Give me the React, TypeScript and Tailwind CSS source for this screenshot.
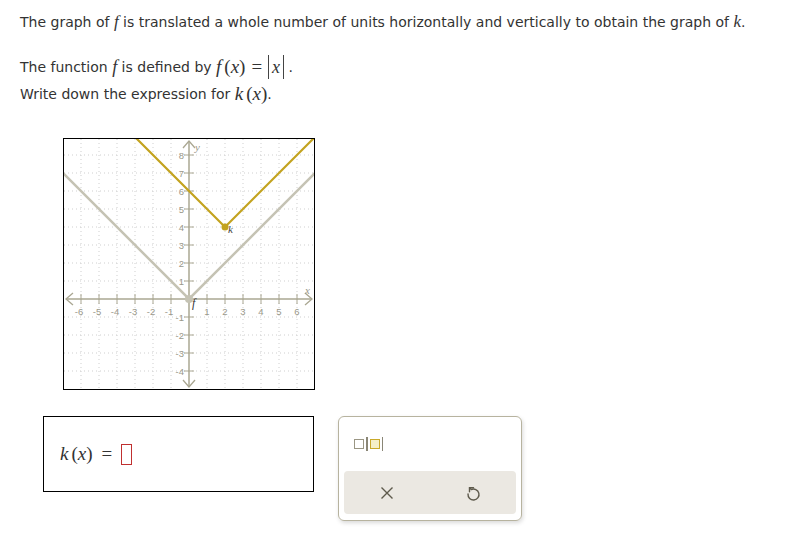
import React from "react";

const U = 18;
const OX = 125;
const OY = 160;

function Graph() {
  const xs = [-6, -5, -4, -3, -2, -1, 1, 2, 3, 4, 5, 6];
  const ys = [-4, -3, -2, -1, 1, 2, 3, 4, 5, 6, 7, 8];
  const grid: React.ReactNode[] = [];
  for (let k = -6; k <= 6; k++) {
    const x = OX + k * U;
    if (k !== 0)
      grid.push(<line key={"gx" + k} x1={x} y1={0} x2={x} y2={250} stroke="#cfcfcf" strokeWidth={1} strokeDasharray="1 3" />);
  }
  for (let k = -4; k <= 8; k++) {
    const y = OY - k * U;
    if (k !== 0)
      grid.push(<line key={"gy" + k} x1={0} y1={y} x2={250} y2={y} stroke="#cfcfcf" strokeWidth={1} strokeDasharray="1 3" />);
  }
  const ax = "#aaa792";
  const lab = "#9a988a";
  return (
    <svg width={250} height={250} viewBox="0 0 250 250" className="block">
      {grid}
      <line x1={2} y1={OY} x2={248} y2={OY} stroke={ax} strokeWidth={1.5} />
      <line x1={OX} y1={2} x2={OX} y2={248} stroke={ax} strokeWidth={1.5} />
      <polyline points={`9,${OY - 6} 2,${OY} 9,${OY + 6}`} fill="none" stroke={ax} strokeWidth={1.3} />
      <polyline points={`241,${OY - 6} 248,${OY} 241,${OY + 6}`} fill="none" stroke={ax} strokeWidth={1.3} />
      <polyline points={`${OX - 6},9 ${OX},2 ${OX + 6},9`} fill="none" stroke={ax} strokeWidth={1.3} />
      <polyline points={`${OX - 6},241 ${OX},248 ${OX + 6},241`} fill="none" stroke={ax} strokeWidth={1.3} />
      {xs.map((k) => (
        <g key={"tx" + k}>
          <line x1={OX + k * U} y1={OY - 5} x2={OX + k * U} y2={OY + 5} stroke={ax} strokeWidth={1} />
          <text x={OX + k * U - (k < 0 ? 2 : 0)} y={OY + 16} textAnchor="middle" fontSize={9.5} fill={lab} fontFamily="'Liberation Sans', sans-serif">
            {k}
          </text>
        </g>
      ))}
      {ys.map((k) => (
        <g key={"ty" + k}>
          <line x1={OX - 5} y1={OY - k * U} x2={OX + 5} y2={OY - k * U} stroke={ax} strokeWidth={1} />
          <text x={OX - 5} y={OY - k * U + 3.5} textAnchor="end" fontSize={9.5} fill={lab} fontFamily="'Liberation Sans', sans-serif">
            {k}
          </text>
        </g>
      ))}
      <text x={131} y={12} fontSize={11} fontStyle="italic" fill={lab} fontFamily="'Liberation Serif', serif">y</text>
      <text x={241} y={155} fontSize={11} fontStyle="italic" fill={lab} fontFamily="'Liberation Serif', serif">x</text>
      <polyline points={`${OX - 7 * U},${OY - 7 * U} ${OX},${OY} ${OX + 7 * U},${OY - 7 * U}`} fill="none" stroke="#c5c3b4" strokeWidth={2.5} />
      <circle cx={OX} cy={OY} r={4} fill="#c5c3b4" />
      <polyline points={`${OX + 2 * U - 100},${OY - 4 * U - 100} ${OX + 2 * U},${OY - 4 * U} ${OX + 2 * U + 100},${OY - 4 * U - 100}`} fill="none" stroke="#c3a31f" strokeWidth={2.2} />
      <circle cx={OX + 2 * U} cy={OY - 4 * U} r={3.5} fill="#c3a31f" />
      <text x={OX + 2 * U + 3} y={OY - 4 * U + 6} fontSize={11} fontStyle="italic" fill="#444" fontFamily="'Liberation Serif', serif">k</text>
      <text x={OX + 3} y={OY + 8} fontSize={12} fontStyle="italic" fill="#333" fontFamily="'Liberation Serif', serif">f</text>
    </svg>
  );
}

const M = "font-['Liberation_Serif',serif] italic";

export default function App() {
  return (
    <div className="w-[797px] h-[551px] bg-white text-[#333] font-['DejaVu_Sans',Verdana,sans-serif] text-[14px] relative">
      <div className="pt-[12px] pl-[20px]">
        <p className="leading-[20px]">
          The graph of <span className={`${M} text-[17px]`}>f</span> is translated a whole number of units horizontally and vertically to obtain the graph of <span className={`${M} text-[17px]`}>k</span>.
        </p>
        <p className="mt-[23px] leading-[22px] flex items-center">
          <span>The function&nbsp;</span>
          <span className={`${M} text-[18px]`}>f</span>
          <span>&nbsp;is defined by&nbsp;</span>
          <span className={`${M} text-[19px]`}>f</span>
          <span className="font-['Liberation_Serif',serif] text-[19px] ml-[3px]">
            (<span className="italic">x</span>)
          </span>
          <span className="font-['Liberation_Serif',serif] text-[19px] mx-[6px]">=</span>
          <span className="inline-flex items-center h-[24px] border-x border-[#444] px-[3px] font-['Liberation_Serif',serif] italic text-[18px] leading-none">x</span>
          <span>&nbsp;.</span>
        </p>
        <p className="mt-[4px] leading-[22px] flex items-center">
          <span>Write down the expression for&nbsp;</span>
          <span className={`${M} text-[19px]`}>k</span>
          <span className="font-['Liberation_Serif',serif] text-[19px] ml-[3px]">
            (<span className="italic">x</span>)
          </span>
          <span>.</span>
        </p>
      </div>

      <div className="ml-[63px] mt-[33px] w-[252px] h-[252px] border border-black">
        <Graph />
      </div>

      <div className="flex mt-[26px]">
        <div className="ml-[43px] w-[271px] h-[76px] border border-black flex items-center pl-[16px]">
          <span className="font-['Liberation_Serif',serif] text-[19px] text-[#333] flex items-center">
            <span className="italic">k</span>
            <span className="ml-[3px]">(</span>
            <span className="italic">x</span>
            <span>)</span>
            <span className="mx-[9px]">=</span>
            <span className="inline-block w-[11px] h-[21px] border border-[#c03030]"></span>
          </span>
        </div>
        <div className="ml-[24px] w-[184px] h-[105px] border border-[#b7b39f] rounded-[6px] shadow-[1px_2px_4px_rgba(0,0,0,0.15)] flex flex-col">
          <div className="h-[54px] flex items-center pl-[15px] gap-[1px]">
            <span className="inline-block w-[10px] h-[10px] border border-[#9a9684] bg-white"></span>
            <span className="inline-block w-[1.5px] h-[14px] bg-[#8a8676] mx-[1px]"></span>
            <span className="inline-block w-[10px] h-[10px] border border-[#c9a92a] bg-[#f5efc7]"></span>
            <span className="inline-block w-[1.5px] h-[14px] bg-[#8a8676] mx-[1px]"></span>
          </div>
          <div className="mx-[5px] h-[43px] rounded-[4px] bg-[#ebe8e2] flex items-center">
            <div className="w-1/2 flex justify-center">
              <svg width="14" height="14" viewBox="0 0 14 14">
                <path d="M1.5 1.5 L12.5 12.5 M12.5 1.5 L1.5 12.5" stroke="#5e5a4c" strokeWidth="1.4" fill="none" />
              </svg>
            </div>
            <div className="w-1/2 flex justify-center">
              <svg width="16" height="18" viewBox="0 0 16 18">
                <path d="M4.5 3.8 L6.17 5.52 A5.5 5.5 0 1 1 3.02 10.02" stroke="#5e5a4c" strokeWidth="1.4" fill="none" strokeLinecap="round" />
                <path d="M8.5 3.8 H4.5 V7.8" stroke="#5e5a4c" strokeWidth="1.4" fill="none" strokeLinecap="round" strokeLinejoin="round" />
              </svg>
            </div>
          </div>
        </div>
      </div>
    </div>
  );
}
